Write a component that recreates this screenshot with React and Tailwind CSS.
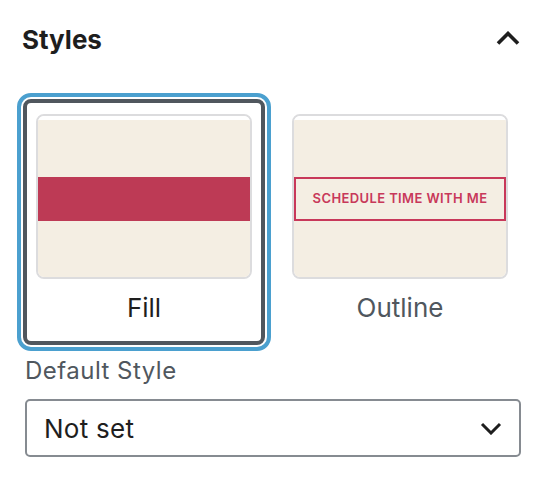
import React from 'react';

const font = { fontFamily: 'Inter, "Liberation Sans", sans-serif' };

const StyleCard = ({ label, active, children }) => (
    <div
        className={`rounded-[8px] border-4 px-[9px] pt-[11px] pb-[6px] ${
            active
                ? 'border-[#50575e] outline-4 outline-offset-2 outline-[#4ba0cf]'
                : 'border-transparent'
        }`}
    >
        <div className="flex h-[165px] flex-col overflow-hidden rounded-[8px] border-2 border-[#dcdcde]">
            <div className="h-[4px] bg-white" />
            <div className="flex flex-1 flex-col justify-center bg-[#f4eee3]">{children}</div>
        </div>
        <div
            className={`flex h-[56px] items-center justify-center text-[26px] ${
                active ? 'text-[#1e1e1e]' : 'text-[#50575e]'
            }`}
        >
            {label}
        </div>
    </div>
);

export default function App() {
    return (
        <div className="h-[500px] w-[544px] bg-white" style={font}>
            <div className="flex h-[78px] items-center justify-between pl-[22px] pr-[24px]">
                <h2 className="text-[26px] font-bold text-[#1e1e1e]">Styles</h2>
                <svg width="24" height="14" viewBox="0 0 24 14" className="mt-[-3px]">
                    <polyline points="2,12.5 12,2.5 22,12.5" fill="none" stroke="#1e1e1e" strokeWidth="3.6" />
                </svg>
            </div>

            <div className="grid grid-cols-[242px_242px] gap-x-[14px] pl-[23px] pt-[21px]">
                <StyleCard label="Fill" active>
                    <div className="h-[44px] bg-[#bd3a55]" />
                </StyleCard>
                <StyleCard label="Outline">
                    <div className="flex h-[44px] items-center justify-center border-2 border-[#c8385a] text-[13px] font-semibold uppercase tracking-[0.03em] text-[#c8385a]">
                        Schedule time with me
                    </div>
                </StyleCard>
            </div>

            <div className="px-[25px] pt-[11px]">
                <div className="text-[24px] leading-[30px] tracking-[0.02em] text-[#50575e]">Default Style</div>
                <div className="mt-[13px] flex h-[58px] w-[496px] items-center justify-between rounded-[5px] border-2 border-[#868b91] pl-[17px] pr-[17px]">
                    <span className="text-[26px] tracking-[0.01em] text-[#1e1e1e]">Not set</span>
                    <svg width="22" height="13" viewBox="0 0 22 13">
                        <polyline points="2,2 11,11 20,2" fill="none" stroke="#1e1e1e" strokeWidth="3" />
                    </svg>
                </div>
            </div>
        </div>
    );
}
